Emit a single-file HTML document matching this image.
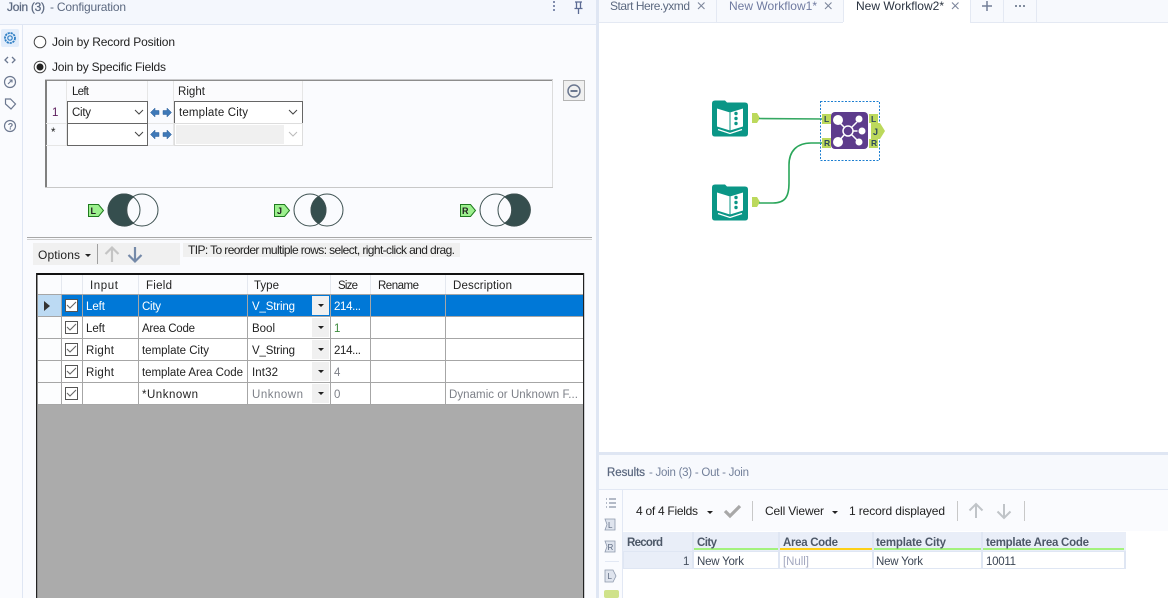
<!DOCTYPE html>
<html><head><meta charset="utf-8"><style>
html,body{margin:0;padding:0;background:#fff;width:1168px;height:598px;overflow:hidden}
svg{display:block}
text{font-family:"Liberation Sans",sans-serif;font-size:12px;fill:#222}
.t{font-size:11.5px;fill:#222}
.w{fill:#fff}
.g{fill:#7d8088}
.b{font-weight:bold;fill:#4d5868}
.h{fill:#5c6980}
</style></head><body>
<svg width="1168" height="598" viewBox="0 0 1168 598" xmlns="http://www.w3.org/2000/svg">
<!-- left panel -->
<rect width="597" height="598" fill="#fafbfe"/>
<rect width="596" height="24" fill="#f4f7fd"/>
<rect y="24" width="596" height="1" fill="#dfe6f3"/>
<rect x="22" y="25" width="1" height="573" fill="#dfe6f3"/>
<rect x="596" width="3" height="598" fill="#dfe6f3"/>
<text x="7" y="11" style="fill:#5c6980;stroke:#5c6980;stroke-width:.25" textLength="38">Join (3)</text>
<text x="50" y="11" class="h" textLength="76">- Configuration</text>
<circle cx="554" cy="2" r="1" fill="#5c6b94"/><circle cx="554" cy="6" r="1" fill="#5c6b94"/><circle cx="554" cy="10" r="1" fill="#5c6b94"/>
<path d="M575 2h7M576.500 2v6M580.500 2v6M574.500 8.500h8M578.500 9v5" stroke="#5c6b94" stroke-width="1.300" fill="none"/>
<!-- sidebar icons -->
<rect x="1" y="29" width="18" height="18" rx="2" fill="#e2edfb"/>
<circle cx="10" cy="38" r="5" fill="none" stroke="#2f7fc4" stroke-width="1.800" stroke-dasharray="2.200 .8"/><circle cx="10" cy="38" r="2.200" fill="none" stroke="#2f7fc4" stroke-width="1.200"/>
<path d="M8 57l-3 3 3 3M12 57l3 3-3 3" stroke="#6c7890" stroke-width="1.300" fill="none"/>
<circle cx="10" cy="82" r="5.500" fill="none" stroke="#6c7890" stroke-width="1.200"/><path d="M8 84l4-4M9.500 80H12v2.500" stroke="#6c7890" stroke-width="1.100" fill="none"/>
<path d="M5.500 99h5l5 5-4.500 5-5.500-5z" fill="none" stroke="#6c7890" stroke-width="1.200"/>
<circle cx="10" cy="126" r="5.500" fill="none" stroke="#6c7890" stroke-width="1.200"/>
<text x="7.800" y="129.500" style="font-size:9px;fill:#6c7890;font-weight:bold">?</text>
<!-- radios -->
<circle cx="40" cy="42" r="5.800" fill="#fff" stroke="#444" stroke-width="1"/>
<text x="52" y="46" textLength="123">Join by Record Position</text>
<circle cx="40" cy="67" r="5.800" fill="#fff" stroke="#444" stroke-width="1"/><circle cx="40" cy="67" r="3.500" fill="#222"/>
<text x="52" y="71" textLength="114">Join by Specific Fields</text>
<!-- config grid -->
<rect x="46" y="81" width="506" height="106" fill="#fafbfe"/>
<rect x="45" y="80" width="508" height="1" fill="#808080"/><rect x="45" y="79.500" width="508" height="1" fill="#9a9a9a"/>
<rect x="45" y="80" width="2" height="108" fill="#808080"/>
<rect x="552" y="80" width="1" height="108" fill="#dcdcdc"/>
<rect x="45" y="187" width="508" height="1" fill="#c8c8c8"/>
<path d="M66.500 81v65M147.500 81v65M173.500 81v65M302.500 81v65M46 123.500h257M46 145.500h257" stroke="#e6e6e6" fill="none"/>
<rect x="67" y="81" width="80" height="20" fill="#fbfbfd"/><rect x="174" y="81" width="128" height="20" fill="#fbfbfd"/>
<text x="72" y="95" class="t" textLength="17">Left</text>
<text x="178" y="95" class="t" textLength="27">Right</text>
<text x="52" y="116" class="t" style="fill:#5a1a5a">1</text>
<text x="51" y="136" class="t">*</text>
<rect x="67.500" y="101.500" width="80" height="22" fill="#fff" stroke="#666"/>
<rect x="67.500" y="123.500" width="80" height="22" fill="#fff" stroke="#666"/>
<rect x="174.500" y="101.500" width="128" height="22" fill="#fff" stroke="#666"/>
<rect x="174.500" y="123.500" width="128" height="22" fill="#fff" stroke="#ddd"/>
<rect x="176" y="125" width="108" height="19" fill="#f0f0f0"/>
<text x="72" y="116" class="t" textLength="19">City</text>
<text x="179" y="116" class="t" textLength="69">template City</text>
<path d="M135 110l4 4 4-4M135 132l4 4 4-4M289 110l4 4 4-4" stroke="#444" fill="none"/>
<path d="M289 132l4 4 4-4" stroke="#bbb" fill="none"/>
<g fill="#3f79b8" stroke="#2a5f9a" stroke-width=".5"><path d="M150.500 112.500l4.500-4.500v2.500h4v4h-4v2.500z"/><path d="M171.500 112.500l-4.500-4.500v2.500h-4v4h4v2.500z"/><path d="M150.500 134.500l4.500-4.500v2.500h4v4h-4v2.500z"/><path d="M171.500 134.500l-4.500-4.500v2.500h-4v4h4v2.500z"/></g>
<!-- minus -->
<rect x="563.500" y="80.500" width="21" height="20" fill="#f0f0f0" stroke="#b4b4b4"/>
<circle cx="574" cy="91" r="6" fill="none" stroke="#6c7890" stroke-width="1.500"/><rect x="570.500" y="90" width="7" height="2" fill="#6c7890"/>
<!-- venn -->
<g fill="none" stroke="#3c5050" stroke-width="1">
<path d="M124 194a16 16 0 1 0 9.500 29a16 16 0 0 1 0-26a16 16 0 0 0-9.500-3z" fill="#354e4e"/>
<circle cx="124" cy="210" r="16"/><circle cx="142" cy="210" r="16"/>
<path d="M318.500 196.500a16 16 0 0 1 0 27a16 16 0 0 1 0-27z" fill="#354e4e"/>
<circle cx="310" cy="210" r="16"/><circle cx="327" cy="210" r="16"/>
<path d="M514 194a16 16 0 1 1-9 29a16 16 0 0 0 0-26a16 16 0 0 1 9-3z" fill="#354e4e"/>
<circle cx="496" cy="210" r="16"/><circle cx="514" cy="210" r="16"/>
</g>
<g fill="#9cf08e" stroke="#1f7a1f"><path d="M88.500 204.500h10l5 6-5 6h-10z"/><path d="M274.500 204.500h10l5 6-5 6h-10z"/><path d="M460.500 204.500h10l5 6-5 6h-10z"/></g>
<text x="90.500" y="214" style="font-size:9px;font-weight:bold">L</text>
<text x="277" y="214" style="font-size:9px;font-weight:bold">J</text>
<text x="462" y="214" style="font-size:9px;font-weight:bold">R</text>
<!-- separators -->
<rect x="27" y="237" width="565" height="1" fill="#a8a8a8"/><rect x="27" y="239" width="565" height="1" fill="#d0d0d0"/>
<!-- options toolbar -->
<rect x="33" y="243" width="147" height="22" fill="#f0f0f0"/>
<rect x="97" y="244" width="1" height="20" fill="#a0a0a0"/>
<text x="38" y="259" textLength="42">Options</text>
<path d="M85 254h6l-3 3z" fill="#222"/>
<path d="M112 262v-14M105.500 254l6.500-6.500 6.500 6.500" stroke="#c4c4c4" stroke-width="2.200" fill="none"/>
<path d="M135 247v14M128.500 255l6.500 6.500 6.500-6.500" stroke="#7489a8" stroke-width="2.200" fill="none"/>
<rect x="183" y="243" width="277" height="14" fill="#f0f0f0"/>
<text x="188" y="254" textLength="267" style="font-size:12px">TIP: To reorder multiple rows: select, right-click and drag.</text>
<!-- field grid -->
<rect x="37" y="274" width="547" height="324" fill="#ababab"/>
<rect x="38" y="275" width="545" height="130" fill="#fff"/>
<rect x="36" y="273" width="548" height="2" fill="#111"/>
<rect x="36" y="273" width="1.200" height="325" fill="#222"/>
<rect x="583" y="273" width="1.200" height="325" fill="#222"/>
<rect x="38" y="275" width="545" height="20" fill="#fbfcfe"/>
<rect x="38" y="295" width="23" height="110" fill="#fcfdfe"/>
<rect x="38" y="295" width="23" height="21" fill="#bcdaf3"/>
<rect x="61" y="295" width="522" height="21" fill="#0078d7"/>
<path d="M44 301l6 5-6 5z" fill="#333"/>
<g fill="none" stroke="#a6a6a6">
<path d="M38 294.500h545M38 316.500h545M38 338.500h545M38 360.500h545M38 382.500h545M38 404.500h545"/>
<path d="M61.500 295v110M82.500 295v110M138.500 295v110M247.500 295v110M330.500 295v110M370.500 295v110M445.500 295v110"/>
<path stroke="#e4e8ef" d="M61.500 275v19M82.500 275v19M138.500 275v19M247.500 275v19M330.500 275v19M370.500 275v19M445.500 275v19"/>
</g>
<g font-size="11.500">
<text x="90" y="289" class="t" textLength="28">Input</text><text x="146" y="289" class="t" textLength="26">Field</text><text x="254" y="289" class="t" textLength="25">Type</text><text x="338" y="289" class="t" textLength="20">Size</text><text x="378" y="289" class="t" textLength="41">Rename</text><text x="453" y="289" class="t" textLength="59">Description</text>
<text x="86" y="310" class="t w" textLength="19">Left</text><text x="142" y="310" class="t w" textLength="19">City</text><text x="252" y="310" class="t w" textLength="43">V_String</text><text x="334" y="310" class="t w" textLength="27">214...</text>
<text x="86" y="332" class="t" textLength="19">Left</text><text x="142" y="332" class="t" textLength="53">Area Code</text><text x="252" y="332" class="t" textLength="23">Bool</text><text x="334" y="332" class="t" style="fill:#3d8a3d">1</text>
<text x="86" y="354" class="t" textLength="28">Right</text><text x="142" y="354" class="t" textLength="67">template City</text><text x="252" y="354" class="t" textLength="43">V_String</text><text x="334" y="354" class="t" textLength="27">214...</text>
<text x="86" y="376" class="t" textLength="28">Right</text><text x="142" y="376" class="t" textLength="101">template Area Code</text><text x="252" y="376" class="t" textLength="26">Int32</text><text x="334" y="376" class="t g">4</text>
<text x="142" y="398" class="t" textLength="56">*Unknown</text><text x="252" y="398" class="t g" textLength="51">Unknown</text><text x="334" y="398" class="t g">0</text><text x="449" y="398" class="t g" textLength="129">Dynamic or Unknown F...</text>
</g>
<g fill="#f0f0f0"><rect x="312" y="296" width="17" height="19"/><rect x="312" y="318" width="17" height="19"/><rect x="312" y="340" width="17" height="19"/><rect x="312" y="362" width="17" height="19"/><rect x="312" y="384" width="17" height="19"/></g>
<g fill="#222"><path d="M318 304h6l-3 3zM318 326h6l-3 3zM318 348h6l-3 3zM318 370h6l-3 3zM318 392h6l-3 3z"/></g>
<g fill="#fff" stroke="#555"><rect x="65.500" y="299.500" width="12" height="12"/><rect x="65.500" y="321.500" width="12" height="12"/><rect x="65.500" y="343.500" width="12" height="12"/><rect x="65.500" y="365.500" width="12" height="12"/><rect x="65.500" y="387.500" width="12" height="12"/></g>
<g fill="none" stroke="#666" stroke-width="1.100"><path d="M67 305l3 3 6-6M67 327l3 3 6-6M67 349l3 3 6-6M67 371l3 3 6-6M67 393l3 3 6-6"/></g>
<!-- tabs -->
<rect x="599" width="569" height="22" fill="#f7f9fd"/>
<rect x="599" y="22" width="569" height="1" fill="#e4e9f3"/>
<rect x="843" width="127" height="23" fill="#fff"/>
<path d="M716.500 0v22M843.500 0v22M970.500 0v22M1003.500 0v22M1036.500 0v22" stroke="#e4e9f3"/>
<text x="610" y="10" class="h" textLength="80">Start Here.yxmd</text>
<text x="729" y="10" style="fill:#6f7aa0" textLength="88">New Workflow1*</text>
<text x="856" y="10" style="fill:#2a3340" textLength="88">New Workflow2*</text>
<path d="M698 2.500l6.500 6.500M704.500 2.500L698 9M825 2.500l6.500 6.500M831.500 2.500L825 9M952 2.500l6.500 6.500M958.500 2.500L952 9" stroke="#7d879c" stroke-width="1.100"/>
<path d="M987 1v10M982 6h10" stroke="#737f98" stroke-width="1.500"/>
<g fill="#5c6980"><circle cx="1016" cy="6" r="1"/><circle cx="1020" cy="6" r="1"/><circle cx="1024" cy="6" r="1"/></g>
<!-- canvas -->
<defs><g id="inp">
<path d="M0 3q0-3 3-3h10l2 2h18q3 0 3 3v28q0 3-3 3H3q-3 0-3-3z" fill="#0a9686"/>
<path d="M5 8l13 4 13-4v18l-13 4-13-4z" fill="#fff"/>
<path d="M18 12v18" stroke="#0a9686" stroke-width="1"/>
<circle cx="24" cy="13" r="1.700" fill="#0a9686"/><circle cx="24" cy="18" r="1.700" fill="#0a9686"/><circle cx="24" cy="23" r="1.700" fill="#0a9686"/>
<path d="M6 29l12 4 12-4" stroke="#fff" stroke-width="1.300" fill="none"/>
</g></defs>
<use href="#inp" x="712" y="100.500"/><use href="#inp" x="712" y="184.500"/>
<g fill="#bcd95c"><path d="M752 113h5l3 5-3 5h-5z"/><path d="M752 197h5l3 5-3 5h-5z"/></g>
<path d="M759 118.500L824 119" stroke="#35a862" stroke-width="1.600" fill="none"/>
<path d="M759 203h14c12 0 16-6 16-20v-18c0-14 8-22 22-22h13" stroke="#2aa65a" stroke-width="1.600" fill="none"/>
<rect x="820.500" y="101.500" width="59" height="59" fill="none" stroke="#1d7fd1" stroke-dasharray="2 1.500"/>
<g fill="#bcd95c"><rect x="822" y="114" width="9" height="10"/><rect x="822" y="138" width="9" height="10"/><rect x="869" y="114" width="9" height="9"/><rect x="869" y="139" width="9" height="9"/><path d="M871 123h9l5 8-5 8h-9z"/></g>
<g style="font-weight:bold"><text x="824" y="122" style="font-size:8.500px;font-weight:bold;fill:#2d4a5a">L</text><text x="824" y="146" style="font-size:8.500px;font-weight:bold;fill:#2d4a5a">R</text><text x="871" y="122" style="font-size:8.500px;font-weight:bold;fill:#2d4a5a">L</text><text x="871" y="146" style="font-size:8.500px;font-weight:bold;fill:#2d4a5a">R</text><text x="873" y="135" style="font-size:9px;font-weight:bold;fill:#2d4a5a">J</text></g>
<rect x="831" y="112" width="37" height="37" rx="4" fill="#5d3c8c"/>
<g stroke="#fff" stroke-width="1.500" fill="none"><circle cx="848" cy="131" r="5"/><path d="M844 127l-6-6M852 127l5-5M853.500 131h4M844 135l-5 6M852 135l5 5"/></g>
<g fill="#fff"><circle cx="838" cy="120" r="5"/><circle cx="859" cy="119" r="3.500"/><circle cx="862" cy="131" r="3.500"/><circle cx="838" cy="142" r="5"/><circle cx="859" cy="142" r="3.500"/></g>
<!-- results -->
<rect x="599" y="452" width="569" height="3" fill="#dfe6f3"/>
<rect x="599" y="455" width="569" height="34" fill="#f7f9fd"/>
<rect x="599" y="489" width="569" height="1" fill="#e2e8f4"/>
<rect x="623" y="490" width="545" height="41" fill="#fafbfe"/>
<rect x="599" y="490" width="23" height="108" fill="#fafbfe"/>
<rect x="622" y="490" width="1" height="108" fill="#e2e8f4"/>
<text x="607" y="476" style="font-size:11.500px;fill:#5c6980;stroke:#5c6980;stroke-width:.25" textLength="38">Results</text>
<text x="649" y="476" style="font-size:11.500px;fill:#73809a" textLength="100">- Join (3) - Out - Join</text>
<path d="M606 499h1M609 499h7M606 503h1M609 503h7M606 507h1M609 507h7" stroke="#6c7890" fill="none"/>
<g fill="#dfe4ee" stroke="#8d98ac" stroke-width=".8"><path d="M605 519h10v11h-10l2-5.500z"/><path d="M605 541h10v11h-10l2-5.500z"/><path d="M605 570h8l3 6-3 6h-8z"/></g>
<text x="608" y="528" style="font-size:8px;fill:#5c6980">L</text><text x="607.500" y="550" style="font-size:8px;fill:#5c6980">R</text><text x="607.500" y="579" style="font-size:8px;fill:#5c6980">L</text>
<rect x="604" y="590" width="15" height="8" rx="2" fill="#cfe28a"/>
<rect x="605" y="561" width="14" height="1" fill="#e2e8f4"/>
<text x="636" y="515" textLength="62">4 of 4 Fields</text>
<path d="M707 511h6l-3 3z" fill="#222"/>
<path d="M725 511l5 5 10-10" stroke="#a8a8a8" stroke-width="3.200" fill="none"/>
<rect x="752" y="501" width="1" height="20" fill="#c8c8c8"/>
<text x="765" y="515" textLength="59">Cell Viewer</text>
<path d="M832 511h6l-3 3z" fill="#222"/>
<text x="849" y="515" textLength="96">1 record displayed</text>
<rect x="957" y="501" width="1" height="20" fill="#c8c8c8"/><rect x="1024" y="501" width="1" height="20" fill="#c8c8c8"/>
<path d="M976 518v-14M969.500 510.500l6.500-6.500 6.500 6.500M1004 504v14M997.500 511.500l6.500 6.500 6.500-6.500" stroke="#c0c4c8" stroke-width="2" fill="none"/>
<!-- results table -->
<rect x="623" y="531" width="545" height="67" fill="#fff"/>
<rect x="623" y="532" width="503" height="19" fill="#e9eef8"/>
<rect x="623" y="551" width="503" height="18" fill="#dfe6f3"/>
<rect x="624" y="552" width="68" height="16" fill="#e9eef8"/>
<rect x="694" y="552" width="84" height="16" fill="#fff"/><rect x="780" y="552" width="92" height="16" fill="#fff"/><rect x="874" y="552" width="107" height="16" fill="#fff"/><rect x="983" y="552" width="141" height="16" fill="#fff"/>
<rect x="692" y="532" width="2" height="19" fill="#dfe6f3"/><rect x="778" y="532" width="2" height="19" fill="#dfe6f3"/><rect x="872" y="532" width="2" height="19" fill="#dfe6f3"/><rect x="981" y="532" width="2" height="19" fill="#dfe6f3"/>
<rect x="694" y="548" width="84" height="2" fill="#a3f27d"/><rect x="780" y="548" width="92" height="2" fill="#fdd017"/><rect x="874" y="548" width="107" height="2" fill="#a3f27d"/><rect x="983" y="548" width="141" height="2" fill="#a3f27d"/>
<g style="font-size:11.500px">
<text x="627" y="546" class="b" style="font-size:11.500px" textLength="36">Record</text>
<text x="697" y="546" class="b" style="font-size:11.500px" textLength="20">City</text>
<text x="783" y="546" class="b" style="font-size:11.500px" textLength="55">Area Code</text>
<text x="876" y="546" class="b" style="font-size:11.500px" textLength="70">template City</text>
<text x="986" y="546" class="b" style="font-size:11.500px" textLength="103">template Area Code</text>
<text x="683" y="565" style="font-size:11.500px;fill:#46505f">1</text>
<text x="697" y="565" style="font-size:11.500px;fill:#3d4756" textLength="47">New York</text>
<text x="783" y="565" style="font-size:11.500px;fill:#a4a9c0" textLength="26">[Null]</text>
<text x="876" y="565" style="font-size:11.500px;fill:#3d4756" textLength="47">New York</text>
<text x="986" y="565" style="font-size:11.500px;fill:#3d4756" textLength="30">10011</text>
</g>
</svg>
</body></html>
